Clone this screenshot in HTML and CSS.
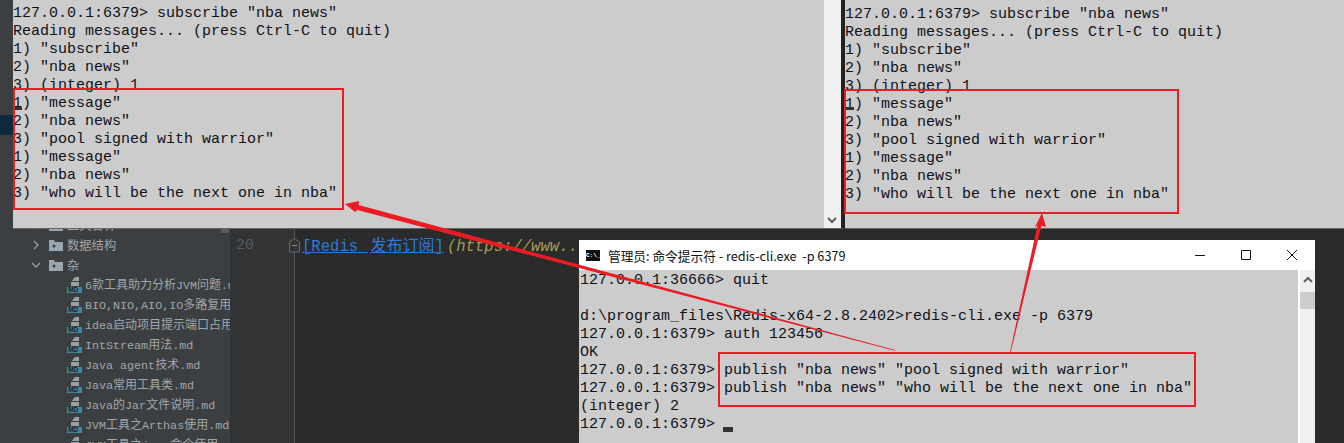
FILE: index.html
```html
<!DOCTYPE html>
<html lang="zh-CN">
<head>
<meta charset="utf-8">
<title>Redis 发布订阅</title>
<link rel="stylesheet" href="styles.css">
</head>
<body>
<svg class="defs" width="0" height="0" aria-hidden="true">
  <symbol id="folder" viewBox="0 0 14 11">
    <path d="M0 0h5l1 2h8v9H0z" fill="#9aa7b0"/>
    <circle cx="5" cy="6" r="1.5" fill="#3c3f41"/>
  </symbol>
  <symbol id="md" viewBox="0 0 16 16">
    <path d="M4 5 8 0h4v9H4z" fill="#9aa0a4"/>
    <path d="M4 4.5h8" stroke="#3c3f41" stroke-width="1"/>
    <rect x="0" y="10" width="15" height="6" fill="#3a87a8"/>
    <text x="1.2" y="15.4" class="md-label">MD</text>
  </symbol>
</svg>

<div class="ide">
  <aside class="tree">
    <div class="row selected"></div>
    <div class="tree-gap"></div>
    <div class="row dir"><svg class="chev"><path d="M3 1l4 4-4 4" /></svg><svg class="folder"><use href="#folder"/></svg><span class="cjk">工具合计</span></div>
    <div class="row dir"><svg class="chev"><path d="M3 1l4 4-4 4" /></svg><svg class="folder"><use href="#folder"/></svg><span class="cjk">数据结构</span></div>
    <div class="row dir"><svg class="chev"><path d="M1 3l4 4 4-4" /></svg><svg class="folder"><use href="#folder"/></svg><span class="cjk">杂</span></div>
    <div class="row file"><svg class="md"><use href="#md"/></svg><span>6<span class="cjk">款工具助力分析</span>JVM<span class="cjk">问题</span>.md</span></div>
    <div class="row file"><svg class="md"><use href="#md"/></svg><span>BIO,NIO,AIO,IO<span class="cjk">多路复用</span>.md</span></div>
    <div class="row file"><svg class="md"><use href="#md"/></svg><span>idea<span class="cjk">启动项目提示端口占用</span>.md</span></div>
    <div class="row file"><svg class="md"><use href="#md"/></svg><span>IntStream<span class="cjk">用法</span>.md</span></div>
    <div class="row file"><svg class="md"><use href="#md"/></svg><span>Java agent<span class="cjk">技术</span>.md</span></div>
    <div class="row file"><svg class="md"><use href="#md"/></svg><span>Java<span class="cjk">常用工具类</span>.md</span></div>
    <div class="row file"><svg class="md"><use href="#md"/></svg><span>Java<span class="cjk">的</span>Jar<span class="cjk">文件说明</span>.md</span></div>
    <div class="row file"><svg class="md"><use href="#md"/></svg><span>JVM<span class="cjk">工具之</span>Arthas<span class="cjk">使用</span>.md</span></div>
    <div class="row file"><svg class="md"><use href="#md"/></svg><span>JVM<span class="cjk">工具之</span>java<span class="cjk">命令使用</span>.md</span></div>
    <div class="tree-thumb"></div>
  </aside>
  <div class="gutter">
    <span class="lineno">20</span>
    <svg class="fold" width="11" height="15" viewBox="0 0 11 15"><path d="M.5 4 5.5.5l5 3.5v10H.5z" fill="#313335" stroke="#6a6d6f"/><path d="M3 7.5h5" stroke="#8a8d8f"/></svg>
  </div>
  <main class="editor">
    <div class="code"><a class="link">[Redis <span class="cjk-code">发布订阅</span>]</a><span class="url">(https://www..</span></div>
  </main>
</div>

<section class="term term-left">
<pre class="screen">127.0.0.1:6379&gt; subscribe "nba news"
Reading messages... (press Ctrl-C to quit)
1) "subscribe"
2) "nba news"
3) (integer) 1
1) "message"
2) "nba news"
3) "pool signed with warrior"
1) "message"
2) "nba news"
3) "who will be the next one in nba"</pre>
<i class="cursor"></i>
<div class="scrollbar"><svg class="sb-down" width="10" height="7" viewBox="0 0 10 7"><path d="M1 1l4 4 4-4"/></svg></div>
</section>

<section class="term term-right">
<pre class="screen">127.0.0.1:6379&gt; subscribe "nba news"
Reading messages... (press Ctrl-C to quit)
1) "subscribe"
2) "nba news"
3) (integer) 1
1) "message"
2) "nba news"
3) "pool signed with warrior"
1) "message"
2) "nba news"
3) "who will be the next one in nba"</pre>
<i class="cursor"></i>
</section>

<section class="cmd">
  <header class="cmd-title">
    <span class="cmd-icon">C:\_</span>
    <span class="cmd-name">管理员: 命令提示符 - redis-cli.exe&nbsp; -p 6379</span>
    <span class="controls">
      <svg width="10" height="10" viewBox="0 0 10 10"><path d="M0 5.5h10"/></svg>
      <svg width="10" height="10" viewBox="0 0 10 10"><path d="M.5.5h9v9h-9z"/></svg>
      <svg width="10" height="10" viewBox="0 0 10 10"><path d="M0 0l10 10M10 0 0 10"/></svg>
    </span>
  </header>
  <div class="cmd-body">
<pre class="screen">127.0.0.1:36666&gt; quit

d:\program_files\Redis-x64-2.8.2402&gt;redis-cli.exe -p 6379
127.0.0.1:6379&gt; auth 123456
OK
127.0.0.1:6379&gt; publish "nba news" "pool signed with warrior"
127.0.0.1:6379&gt; publish "nba news" "who will be the next one in nba"
(integer) 2
127.0.0.1:6379&gt; </pre>
    <i class="cursor"></i>
    <div class="scrollbar cmd-sb">
      <svg class="sb-up" width="10" height="7" viewBox="0 0 10 7"><path d="M1 6l4-4 4 4"/></svg>
      <div class="sb-thumb"></div>
    </div>
  </div>
</section>

<div class="mark mark-left"></div>
<div class="mark mark-right"></div>
<div class="mark mark-cmd"></div>
<svg class="arrows" width="1344" height="443" viewBox="0 0 1344 443" aria-hidden="true">
  <polygon points="345,204 359,201 358.6,205.1 895,350 894.8,350.8 357.4,209.9 355,212"/>
  <polygon points="1042,213 1046,227 1041.5,225.5 1010.5,353 1009.8,353 1037.5,225 1034.5,228"/>
</svg>
</body>
</html>
```
FILE: styles.css
```css
* { box-sizing: border-box; }
html, body { margin: 0; height: 100%; }
body { position: relative; width: 1344px; height: 443px; overflow: hidden; background: #2b2b2b; }
.defs { position: absolute; }

/* IDE behind the terminals */
.ide { display: flex; height: 443px; overflow: hidden; }
.tree { position: relative; width: 230px; flex: none; padding-top: 115px; background: #3c3f41; color: #a3a6a8; font: 11.7px/20px "Liberation Mono", monospace; overflow: hidden; }
.row { display: flex; align-items: center; height: 20px; white-space: nowrap; }
.selected { background: #0d293e; }
.tree-gap { height: 80px; }
.dir { padding-left: 31px; }
.file { padding-left: 67px; }
.cjk { font: 12px/20px "Noto Sans CJK SC", sans-serif; }
.dir .cjk { font-size: 12.3px; }
.chev { width: 10px; height: 10px; flex: none; fill: none; stroke: #9a9da0; stroke-width: 1.4; }
.folder { width: 14px; height: 11px; flex: none; margin: 0 4px 0 8px; }
.md { width: 16px; height: 16px; flex: none; margin-right: 2px; }
.md-label { font: bold 6.5px "Liberation Sans", sans-serif; fill: #222; }
.tree-thumb { position: absolute; left: 221px; top: 200px; width: 8px; height: 33px; background: #595b5d; }

.gutter { position: relative; width: 65px; flex: none; padding: 236px 0 0 6px; background: #313335; border-right: 1px solid #555; color: #585b5e; font: 15px/20px "Liberation Mono", monospace; }
.lineno { display: block; }
.fold { position: absolute; left: 59px; top: 238px; }
.editor { flex: 1; padding: 234px 0 0 7px; background: #2b2b2b; }
.code { font: 15.6px/20px "Liberation Mono", monospace; white-space: pre; }
.link { color: #287bde; text-decoration: underline; }
.cjk-code { margin-left: 3px; font: 16px/20px "Noto Sans CJK SC", sans-serif; }
.url { margin-left: 3px; color: #a49c55; font-style: italic; }

/* Terminal windows on the desktop */
.term, .cmd { position: absolute; background: #ccc; overflow: hidden; }
.screen { margin: 0; color: #101018; font: 15px/18px "Liberation Mono", monospace; white-space: pre; }
.cursor { position: absolute; width: 8px; height: 3px; background: #333; }
.term { top: 0; height: 229px; border-bottom: 1px solid #666; }
.term-left { left: 13px; width: 832px; padding-top: 5px; border-right: 4px solid #222; }
.term-left .cursor { left: 1px; top: 107px; }
.term-right { left: 845px; width: 499px; padding-top: 6px; }
.term-right .cursor { left: 1px; top: 107px; }
.scrollbar { position: absolute; top: 0; right: 0; width: 17px; height: 100%; background: #f0f0f0; }
.scrollbar svg { position: absolute; left: 3px; fill: none; stroke: #606060; stroke-width: 2; }
.sb-down { bottom: 4px; }
.sb-up { top: 6px; }
.sb-thumb { position: absolute; top: 22px; left: 0; width: 17px; height: 17px; background: #cdcdcd; }

.cmd { left: 579px; top: 240px; width: 736px; height: 203px; }
.cmd-title { display: flex; align-items: center; height: 30px; padding-left: 7px; background: #fff; }
.cmd-icon { width: 14px; height: 11px; background: #111; color: #fff; font: bold 6px/11px "Liberation Mono", monospace; text-align: center; overflow: hidden; }
.cmd-name { margin-left: 8px; color: #111; font: 12.7px "Noto Sans CJK SC", "Open Sans", sans-serif; white-space: nowrap; }
.controls { display: flex; gap: 36px; margin-left: auto; padding-right: 18px; }
.controls svg { fill: none; stroke: #111; stroke-width: 1; overflow: visible; }
.cmd-body { position: relative; height: 173px; padding: 2px 0 0 1px; }
.cmd-body .cursor { left: 144px; top: 157px; width: 10px; height: 5px; }
.cmd-sb { border-left: 2px solid #fff; }
.cmd-sb .sb-thumb { left: 0; }

/* Annotations */
.mark { position: absolute; border: 2px solid #ed1c24; }
.mark-left { left: 13px; top: 88px; width: 331px; height: 122px; }
.mark-right { left: 844px; top: 89px; width: 335px; height: 125px; }
.mark-cmd { left: 718px; top: 352px; width: 478px; height: 55px; }
.arrows { position: absolute; left: 0; top: 0; fill: #ed1c24; }
```
